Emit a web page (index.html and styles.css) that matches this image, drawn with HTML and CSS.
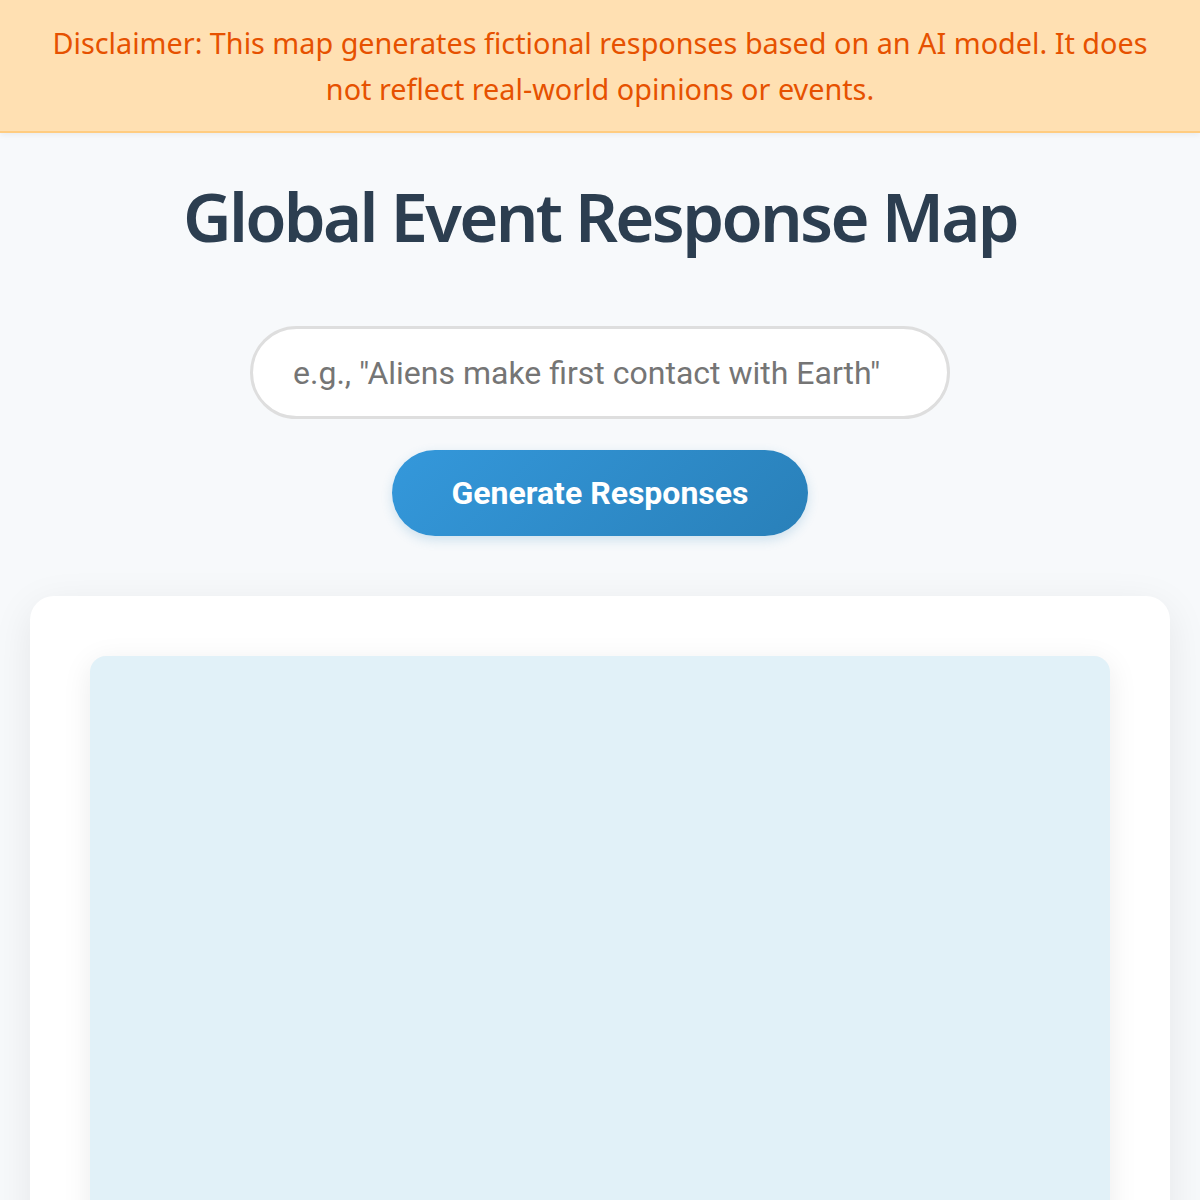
FILE: index.html
```html
<!DOCTYPE html>
<html lang="en">
<head>
<meta charset="utf-8">
<title>Global Event Response Map</title>
<link rel="stylesheet" href="styles.css">
</head>
<body>
<div class="disclaimer">Disclaimer: This map generates fictional responses based on an AI model. It does not reflect real-world opinions or events.</div>
<main class="page">
  <h1 class="title">Global Event Response Map</h1>
  <div class="controls">
    <input class="event-input" type="text" placeholder="e.g., &quot;Aliens make first contact with Earth&quot;">
    <button class="generate-btn">Generate Responses</button>
  </div>
  <section class="card">
    <div class="map"></div>
  </section>
</main>
</body>
</html>
```
FILE: styles.css
```css
* { box-sizing: border-box; }
html, body { margin: 0; padding: 0; }
body {
  background: #f7f9fb;
  font-family: "Noto Sans", "Open Sans", sans-serif;
  color: #2c3e50;
  overflow: hidden;
  height: 1200px;
}
.disclaimer {
  background: #ffe0b2;
  color: #e65100;
  border-bottom: 2px solid #ffcc80;
  text-align: center;
  font-size: 28.8px;
  line-height: 46px;
  padding: 20px 40px 19px;
  box-shadow: 0 2px 6px rgba(0,0,0,0.06);
}
.page {
  display: flex;
  flex-direction: column;
  align-items: center;
  padding: 0 30px;
}
.title {
  margin: 39px 0 0;
  font-size: 67px;
  font-weight: 600;
  letter-spacing: -2.7px;
  line-height: 88px;
  color: #2c3e50;
}
.controls {
  display: flex;
  flex-direction: column;
  align-items: center;
  gap: 31px;
  margin-top: 66px;
}
.event-input {
  width: 700px;
  height: 93px;
  border: 3px solid #dedede;
  border-radius: 47px;
  background: #fff;
  padding: 0 40px;
  font-family: Roboto, sans-serif;
  font-size: 32px;
  color: #333;
  outline: none;
}
.event-input::placeholder { color: #757575; }
.generate-btn {
  width: 416px;
  height: 86px;
  border: none;
  border-radius: 43px;
  background: linear-gradient(135deg, #3498db, #2980b9);
  color: #fff;
  font-family: Roboto, sans-serif;
  font-size: 32px;
  font-weight: 700;
  box-shadow: 0 4px 12px rgba(41,128,185,0.2);
}
.card {
  align-self: stretch;
  margin-top: 60px;
  background: #fff;
  border-radius: 24px;
  padding: 60px;
  box-shadow: 0 10px 40px rgba(0,0,0,0.08);
  height: 700px;
}
.map {
  height: 700px;
  background: #e1f1f8;
  border-radius: 16px;
  box-shadow: 0 6px 30px rgba(0,0,0,0.08);
}
```
